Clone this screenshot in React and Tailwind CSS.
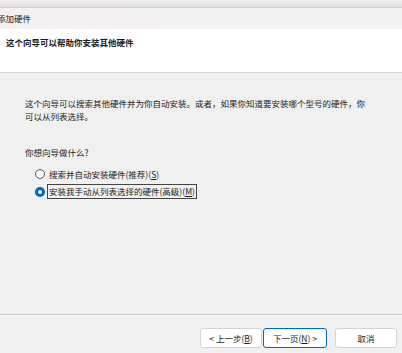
import React from 'react';

const font = { fontFamily: '"Noto Sans CJK SC", "Noto Sans", sans-serif' };

const Radio = ({ checked }) =>
    checked ? (
        <span className="w-[10px] h-[10px] rounded-full bg-[#0067c0] flex items-center justify-center shrink-0">
            <span className="w-[4px] h-[4px] rounded-full bg-white" />
        </span>
    ) : (
        <span className="w-[10px] h-[10px] rounded-full border border-[#5a5a5a] bg-[#f8f8f8] shrink-0" />
    );

const Btn = ({ children, primary }) => (
    <button
        className={
            primary
                ? 'h-[20px] w-[64px] rounded-[3px] border border-[#0067c0] bg-white text-[8.5px] text-[#1b1b1b] flex items-center justify-center'
                : 'h-[20px] w-[62px] rounded-[3px] border border-[#d4d4d4] bg-white text-[8.5px] text-[#1b1b1b] flex items-center justify-center'
        }
    >
        {children}
    </button>
);

export default function App() {
    return (
        <div className="w-[402px] h-[353px] overflow-hidden bg-[#f0f0f0] flex flex-col text-[#1b1b1b]" style={font}>
            <div className="h-[8px] bg-gradient-to-b from-[#efefef] to-[#e4e4e4] border-b border-[#cfcfcf] shrink-0" />
            <div className="h-[21px] bg-gradient-to-r from-[#f6f1f1] to-[#f3f3f3] flex items-center text-[8.5px] shrink-0">
                <span className="ml-[-3px]">添加硬件</span>
            </div>
            <div className="h-[44px] bg-white border-b border-[#d6d6d6] shrink-0 pl-[6px] pt-[7px]">
                <div className="text-[8.5px] font-bold leading-[13px]">这个向导可以帮助你安装其他硬件</div>
            </div>
            <div className="h-[242px] shrink-0 border-b border-[#c9c9c9] pl-[25px] pt-[24px]">
                <p className="text-[8.5px] leading-[13px]">
                    这个向导可以搜索其他硬件并为你自动安装。或者，如果你知道要安装哪个型号的硬件，你
                    <br />
                    可以从列表选择。
                </p>
                <p className="text-[8.5px] leading-[13px] mt-[23px]">你想向导做什么?</p>
                <div className="flex flex-col gap-[3px] mt-[8px] pl-[10px]">
                    <div className="flex items-center gap-[2px] h-[14px]">
                        <Radio />
                        <span className="text-[8.5px] leading-[13px] px-[1px] border border-transparent">
                            搜索并自动安装硬件(推荐)(<span className="underline">S</span>)
                        </span>
                    </div>
                    <div className="flex items-center gap-[2px] h-[15px]">
                        <Radio checked />
                        <span className="text-[8.5px] leading-[13px] px-[1px] border border-[#444]">
                            安装我手动从列表选择的硬件(高级)(<span className="underline">M</span>)
                        </span>
                    </div>
                </div>
            </div>
            <div className="flex-1 border-t border-[#f8f8f8] flex justify-end items-start pt-[12px] pr-[5px]">
                <div className="flex gap-[1px]">
                    <Btn>&lt; 上一步(<span className="underline">B</span>)</Btn>
                    <Btn primary>下一页(<span className="underline">N</span>) &gt;</Btn>
                </div>
                <div className="ml-[8px]">
                    <Btn>取消</Btn>
                </div>
            </div>
        </div>
    );
}
